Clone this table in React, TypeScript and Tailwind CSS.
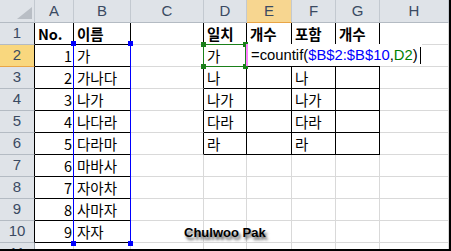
import React from "react";

const cols = ["A", "B", "C", "D", "E", "F", "G", "H"];

const names = ["가", "가나다", "나가", "나다라", "다라마", "마바사", "자아차", "사마자", "자자"];
const match = ["가", "나", "나가", "다라", "라"];
const contain = ["", "나", "나가", "다라", "라"];

function cellText(row: number, col: number): string {
  if (row === 1) {
    return ["No.", "이름", "", "일치", "개수", "포함", "개수", ""][col];
  }
  if (row >= 2 && row <= 10) {
    if (col === 0) return String(row - 1);
    if (col === 1) return names[row - 2];
  }
  if (row >= 2 && row <= 6) {
    if (col === 3) return match[row - 2];
    if (col === 5) return contain[row - 2];
  }
  return "";
}

function inLeft(row: number, col: number) {
  return col <= 1 && row >= 1 && row <= 10;
}
function inRight(row: number, col: number) {
  return col >= 3 && col <= 6 && row >= 1 && row <= 6;
}

function Cell({ row, col }: { row: number; col: number }) {
  const text = cellText(row, col);
  const rightBlack = inLeft(row, col) || inRight(row, col) || (col === 2 && row >= 1 && row <= 6);
  const bottomBlack = inLeft(row, col) || inRight(row, col) || inLeft(row + 1, col) || inRight(row + 1, col);
  const bold = row === 1;
  const number = col === 0 && row >= 2;
  return (
    <div
      className={`flex items-center border-r border-b overflow-hidden whitespace-nowrap text-[14.5px] text-black ${
        rightBlack ? "border-r-black" : "border-r-[#d9d9d9]"
      } ${bottomBlack ? "border-b-black" : "border-b-[#d9d9d9]"} ${
        number ? "justify-end pr-[1px]" : "pl-[3px]"
      } ${bold ? "font-bold" : "font-normal"}`}
      style={{ fontFamily: '"Noto Sans CJK KR", "Liberation Sans", sans-serif' }}
    >
      {text}
    </div>
  );
}

// selection frame with a square handle at each corner
function Frame({ className, handle }: { className: string; handle: string }) {
  return (
    <div className={`absolute flex flex-col justify-between ${className}`}>
      <div className="flex justify-between -mx-[3px] -mt-[3px]">
        <span className={`w-[5px] h-[5px] ${handle}`} />
        <span className={`w-[5px] h-[5px] ${handle}`} />
      </div>
      <div className="flex justify-between -mx-[3px] -mb-[3px]">
        <span className={`w-[5px] h-[5px] ${handle}`} />
        <span className={`w-[5px] h-[5px] ${handle}`} />
      </div>
    </div>
  );
}

export default function App() {
  const rows = Array.from({ length: 11 }, (_, i) => i + 1);
  return (
    <div className="relative w-[451px] h-[251px] overflow-hidden bg-white border-r-2 border-b-2 border-black">
      <div className="grid grid-cols-[35px_39px_57px_73px_43px_45px_44px_44px_69px] grid-rows-[23px_repeat(11,22px)]">
        {/* corner */}
        <div className="relative bg-[#dfe3e8] border-r border-b border-r-[#c3c9d0] border-b-[#b4bbc3]">
          <svg className="absolute left-[17px] top-[7px]" width="15" height="12" viewBox="0 0 15 12">
            <polygon points="15,0 15,12 0,12" fill="#b9bec5" />
          </svg>
        </div>
        {cols.map((c, i) => (
          <div
            key={c}
            className={`flex items-center justify-center border-r border-b text-[15px] text-[#3a4a62] ${
              i === 4
                ? "bg-[#f7d690] border-b-[#e9a546] border-r-[#c3c9d0]"
                : "bg-[#dfe3e8] border-r-[#c3c9d0] border-b-[#b4bbc3]"
            }`}
            style={{ fontFamily: '"Liberation Sans", sans-serif' }}
          >
            {c}
          </div>
        ))}
        {rows.map((r) => (
          <React.Fragment key={r}>
            <div
              className={`flex items-center justify-center border-r border-b text-[15px] text-[#3a4a62] ${
                r === 2 ? "bg-[#f9d77e] border-b-[#e9a546]" : "bg-[#dfe3e8] border-b-[#b4bbc3]"
              } ${r <= 10 ? "border-r-black" : "border-r-[#9aa2ab]"}`}
              style={{ fontFamily: '"Liberation Sans", sans-serif' }}
            >
              {r}
            </div>
            {cols.map((_, ci) => (
              <Cell key={ci} row={r} col={ci} />
            ))}
          </React.Fragment>
        ))}
      </div>

      {/* blue selection B2:B10 */}
      <Frame className="left-[73px] top-[44px] w-[58px] h-[199px] border-x border-[#0000ff]" handle="bg-[#0000ff]" />

      {/* green reference D2 */}
      <Frame className="left-[203px] top-[44px] w-[43px] h-[23px] border border-[#1a7f1a]" handle="bg-[#1a7f1a]" />

      {/* formula being edited in E2 */}
      <div
        className="absolute left-[246px] top-[44px] w-[176px] h-[22px] flex items-center border-l-2 border-[#ff80ff] bg-white pl-[3px] text-[14.8px] whitespace-nowrap"
        style={{ fontFamily: '"Liberation Sans", sans-serif' }}
      >
        <span className="text-black">=countif(</span>
        <span className="text-[#0000ff]">$B$2:$B$10</span>
        <span className="text-black">,</span>
        <span className="text-[#008000]">D2</span>
        <span className="text-black">)</span>
        <span className="ml-[2px] w-[1px] h-[17px] bg-black" />
      </div>

      {/* signature */}
      <div
        className="absolute left-[184px] top-[223px] text-[13px] font-bold text-black [text-shadow:2px_3px_3px_#555]"
        style={{ fontFamily: '"Liberation Sans", sans-serif' }}
      >
        Chulwoo Pak
      </div>
    </div>
  );
}
